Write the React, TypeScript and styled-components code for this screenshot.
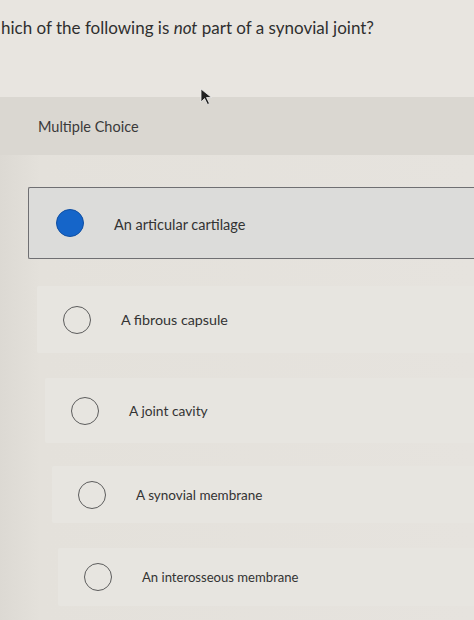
import styled, { createGlobalStyle } from 'styled-components';

const GlobalStyle = createGlobalStyle`
  html, body {
    margin: 0;
    padding: 0;
    background: #e5e2dc;
  }
  body {
    font-family: Lato, "Open Sans", sans-serif;
    color: #333;
  }
`;

const Page = styled.div`
  position: relative;
  width: 474px;
  height: 620px;
  overflow: hidden;
  background: linear-gradient(90deg, #dcd9d3 0px, #e4e1db 40px, #e6e3de 100%);
`;

const Question = styled.div`
  height: 97px;
  padding: 17px 0 0 1px;
  box-sizing: border-box;
  font-size: 17px;
  color: #2f2f2f;
  white-space: nowrap;
  background: #e8e5e0;
  em {
    font-style: italic;
  }
`;

const Band = styled.div`
  height: 58px;
  padding: 21px 0 0 38px;
  box-sizing: border-box;
  font-size: 14.5px;
  color: #3a3a3a;
  background: #dad7d1;
`;

const Options = styled.div`
  display: flex;
  flex-direction: column;
  padding-top: 32px;
`;

const Option = styled.div<{ $selected?: boolean; $shift: number; $height: number; $gap: number }>`
  display: flex;
  align-items: center;
  height: ${(p) => p.$height}px;
  margin-left: ${(p) => p.$shift}px;
  margin-bottom: ${(p) => p.$gap}px;
  box-sizing: border-box;
  background: ${(p) => (p.$selected ? '#dcdcda' : '#e7e5e0')};
  border: ${(p) => (p.$selected ? '1px solid #6f6f72' : 'none')};
  border-right: none;
  border-radius: 2px 0 0 2px;
  padding-left: ${(p) => (p.$selected ? 27 : 26)}px;
`;

const Radio = styled.span<{ $selected?: boolean }>`
  width: 28px;
  height: 28px;
  flex: none;
  border-radius: 50%;
  box-sizing: border-box;
  background: ${(p) => (p.$selected ? '#1565c9' : 'transparent')};
  border: ${(p) => (p.$selected ? '1.5px solid #0f4fa3' : '1.3px solid #5c5c5c')};
`;

const Label = styled.span<{ $size: number }>`
  margin-left: 30px;
  margin-top: ${(p) => (p.$size > 14.4 ? 3 : 0)}px;
  font-size: ${(p) => p.$size}px;
  color: #333;
  white-space: nowrap;
`;

const Cursor = styled.svg`
  position: absolute;
  left: 200px;
  top: 88px;
`;

const choices = [
  { text: 'An articular cartilage', shift: 28, height: 72, gap: 27, size: 14.5, selected: true },
  { text: 'A fibrous capsule', shift: 37, height: 67, gap: 25, size: 14.3 },
  { text: 'A joint cavity', shift: 45, height: 65, gap: 23, size: 13.8 },
  { text: 'A synovial membrane', shift: 52, height: 57, gap: 25, size: 13.5 },
  { text: 'An interosseous membrane', shift: 58, height: 58, gap: 0, size: 13.1 },
];

export default function App() {
  return (
    <>
      <GlobalStyle />
      <Page>
        <Question>
          hich of the following is <em>not</em> part of a synovial joint?
        </Question>
        <Band>Multiple Choice</Band>
        <Options>
          {choices.map((c) => (
            <Option
              key={c.text}
              $selected={c.selected}
              $shift={c.shift}
              $height={c.height}
              $gap={c.gap}
            >
              <Radio $selected={c.selected} />
              <Label $size={c.size}>{c.text}</Label>
            </Option>
          ))}
        </Options>
        <Cursor width="14" height="18" viewBox="0 0 14 18">
          <path d="M1 1 L1 14 L4.5 10.5 L7.5 16.5 L9.5 15.5 L6.5 9.5 L11.5 9.5 Z" fill="#222" stroke="#eee" strokeWidth="0.8" />
        </Cursor>
      </Page>
    </>
  );
}
